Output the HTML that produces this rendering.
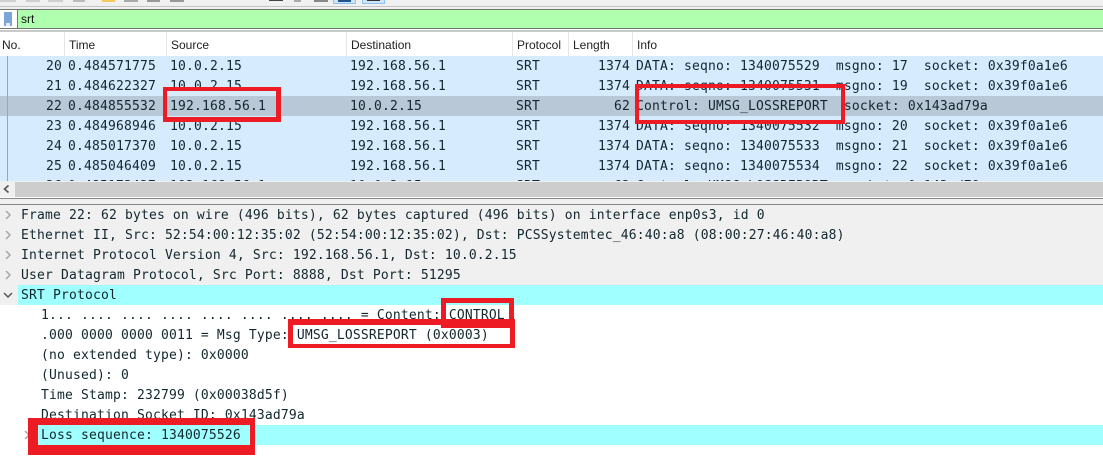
<!DOCTYPE html>
<html><head><meta charset="utf-8"><style>
html,body{margin:0;padding:0;width:1103px;height:461px;overflow:hidden;background:#fff}
div{position:absolute;box-sizing:border-box}
.t{font:13px/22px "DejaVu Sans Mono","Liberation Mono",monospace;letter-spacing:.17px;color:#12272e;white-space:pre;height:20px}
.h{font:12px/26px "Liberation Sans",sans-serif;color:#222;top:32px;height:24px;white-space:pre}
.sep{top:32px;width:1px;height:24px;background:#e5e5e5}
.r{border:4px solid #ed1c24;background:transparent}
</style></head><body>
<div style="left:0;top:0;width:1103px;height:10px;background:#f0f0f0"></div>
<div style="left:0;top:6px;width:1103px;height:1px;background:#c4c4c4"></div>
<div style="left:0;top:0;width:16px;height:2px;background:#cfcfcf"></div>
<div style="left:26px;top:0;width:14px;height:2px;background:#cfcfcf"></div>
<div style="left:48px;top:0;width:15px;height:2px;background:#cfcfcf"></div>
<div style="left:73px;top:0;width:12px;height:2px;background:#bbb"></div>
<div style="left:102px;top:0;width:13px;height:2px;background:#f5c860"></div>
<div style="left:124px;top:0;width:14px;height:2px;background:#aaa"></div>
<div style="left:147px;top:0;width:13px;height:2px;background:#999"></div>
<div style="left:170px;top:0;width:14px;height:2px;background:#999"></div>
<div style="left:269px;top:0;width:14px;height:1px;background:#444"></div>
<div style="left:294px;top:0;width:7px;height:2px;background:#aaa"></div>
<div style="left:314px;top:0;width:14px;height:2px;background:#888"></div>
<div style="left:333px;top:0;width:23px;height:4px;background:#cde4f7;border:1px solid #8ec2ee;border-top:0"></div>
<div style="left:338px;top:0;width:13px;height:2px;background:#24528c"></div>
<div style="left:362px;top:0;width:23px;height:4px;background:#cde4f7;border:1px solid #8ec2ee;border-top:0"></div>
<div style="left:367px;top:0;width:13px;height:1px;background:#333"></div>
<div style="left:0;top:9px;width:1103px;height:20px;background:#afffaf;border-top:1px solid #6f776f;border-bottom:1px solid #6f776f"></div>
<div style="left:0;top:10px;width:18px;height:18px;background:#fff;border-right:1px solid #777"></div>
<div style="left:4px;top:12px;width:8px;height:14px;background:#7ba6d8"></div>
<div style="left:6px;top:23px;width:4px;height:3px;background:#e8eef6"></div>
<div style="left:21px;top:10px;font:12px/19px 'Liberation Sans',sans-serif;color:#111">srt</div>
<div style="left:0;top:30px;width:1103px;height:2px;background:#c9c9c9"></div>

<div class="h" style="left:2px">No.</div><div class="sep" style="left:64px"></div>
<div class="h" style="left:69px">Time</div><div class="sep" style="left:166px"></div>
<div class="h" style="left:171px">Source</div><div class="sep" style="left:346px"></div>
<div class="h" style="left:351px">Destination</div><div class="sep" style="left:512px"></div>
<div class="h" style="left:517px">Protocol</div><div class="sep" style="left:568px"></div>
<div class="h" style="left:573px">Length</div><div class="sep" style="left:632px"></div>
<div class="h" style="left:637px">Info</div>

<div style="left:0;top:56px;width:1103px;height:125px;background:#d7ebff;overflow:hidden">
<div style="left:0;top:40px;width:1103px;height:20px;background:#b8c8d6"></div>
<div style="left:7px;top:0;width:1px;height:125px;background:#9aa6b0"></div>

<div class="t" style="left:46px;top:0">20</div><div class="t" style="left:68px;top:0">0.484571775</div><div class="t" style="left:170px;top:0">10.0.2.15</div><div class="t" style="left:350px;top:0">192.168.56.1</div><div class="t" style="left:516px;top:0">SRT</div><div class="t" style="left:598px;top:0">1374</div><div class="t" style="left:636px;top:0">DATA: seqno: 1340075529  msgno: 17  socket: 0x39f0a1e6</div>

<div class="t" style="left:46px;top:20px">21</div><div class="t" style="left:68px;top:20px">0.484622327</div><div class="t" style="left:170px;top:20px">10.0.2.15</div><div class="t" style="left:350px;top:20px">192.168.56.1</div><div class="t" style="left:516px;top:20px">SRT</div><div class="t" style="left:598px;top:20px">1374</div><div class="t" style="left:636px;top:20px">DATA: seqno: 1340075531  msgno: 19  socket: 0x39f0a1e6</div>

<div class="t" style="left:46px;top:40px">22</div><div class="t" style="left:68px;top:40px">0.484855532</div><div class="t" style="left:170px;top:40px">192.168.56.1</div><div class="t" style="left:350px;top:40px">10.0.2.15</div><div class="t" style="left:516px;top:40px">SRT</div><div class="t" style="left:614px;top:40px">62</div><div class="t" style="left:636px;top:40px">Control: UMSG_LOSSREPORT  socket: 0x143ad79a</div>

<div class="t" style="left:46px;top:60px">23</div><div class="t" style="left:68px;top:60px">0.484968946</div><div class="t" style="left:170px;top:60px">10.0.2.15</div><div class="t" style="left:350px;top:60px">192.168.56.1</div><div class="t" style="left:516px;top:60px">SRT</div><div class="t" style="left:598px;top:60px">1374</div><div class="t" style="left:636px;top:60px">DATA: seqno: 1340075532  msgno: 20  socket: 0x39f0a1e6</div>

<div class="t" style="left:46px;top:80px">24</div><div class="t" style="left:68px;top:80px">0.485017370</div><div class="t" style="left:170px;top:80px">10.0.2.15</div><div class="t" style="left:350px;top:80px">192.168.56.1</div><div class="t" style="left:516px;top:80px">SRT</div><div class="t" style="left:598px;top:80px">1374</div><div class="t" style="left:636px;top:80px">DATA: seqno: 1340075533  msgno: 21  socket: 0x39f0a1e6</div>

<div class="t" style="left:46px;top:100px">25</div><div class="t" style="left:68px;top:100px">0.485046409</div><div class="t" style="left:170px;top:100px">10.0.2.15</div><div class="t" style="left:350px;top:100px">192.168.56.1</div><div class="t" style="left:516px;top:100px">SRT</div><div class="t" style="left:598px;top:100px">1374</div><div class="t" style="left:636px;top:100px">DATA: seqno: 1340075534  msgno: 22  socket: 0x39f0a1e6</div>

<div class="t" style="left:46px;top:120px">26</div><div class="t" style="left:68px;top:120px">0.485173427</div><div class="t" style="left:170px;top:120px">192.168.56.1</div><div class="t" style="left:350px;top:120px">10.0.2.15</div><div class="t" style="left:516px;top:120px">SRT</div><div class="t" style="left:614px;top:120px">62</div><div class="t" style="left:636px;top:120px">Control: UMSG_LOSSREPORT  socket: 0x143ad79a</div>
</div>

<div style="left:0;top:181px;width:1103px;height:16px;background:#f0f0f0"></div>
<div style="left:15px;top:182px;width:1088px;height:15px;background:#cdcdcd"></div>
<svg style="position:absolute;left:2px;top:184px" width="10" height="10"><path d="M6.5 1.5L2.5 5l4 3.5" fill="none" stroke="#555" stroke-width="1.6"/></svg>
<div style="left:0;top:198px;width:1103px;height:1px;background:#84878c"></div>
<div style="left:0;top:199px;width:1103px;height:5px;background:#f0f0f0"></div>
<div style="left:0;top:204px;width:1103px;height:1px;background:#84878c"></div>

<div style="left:0;top:205px;width:1103px;height:80px;background:#f0f0f0"></div>
<div style="left:0;top:285px;width:18px;height:20px;background:#f0f0f0"></div>
<div style="left:18px;top:285px;width:1085px;height:20px;background:#a0ffff"></div>
<div style="left:38px;top:425px;width:1065px;height:20px;background:#a0ffff"></div>

<svg style="position:absolute;left:0;top:205px" width="40" height="240" fill="none">
<path d="M6 6l4 4-4 4M6 26l4 4-4 4M6 46l4 4-4 4M6 66l4 4-4 4" stroke="#a8a8a8" stroke-width="1.5"/>
<path d="M4 88l4 4 4-4" stroke="#555" stroke-width="1.5"/>
<path d="M25 226l4 4-4 4" stroke="#a8a8a8" stroke-width="1.5"/>
</svg>

<div class="t" style="left:21px;top:205px">Frame 22: 62 bytes on wire (496 bits), 62 bytes captured (496 bits) on interface enp0s3, id 0</div>
<div class="t" style="left:21px;top:225px">Ethernet II, Src: 52:54:00:12:35:02 (52:54:00:12:35:02), Dst: PCSSystemtec_46:40:a8 (08:00:27:46:40:a8)</div>
<div class="t" style="left:21px;top:245px">Internet Protocol Version 4, Src: 192.168.56.1, Dst: 10.0.2.15</div>
<div class="t" style="left:21px;top:265px">User Datagram Protocol, Src Port: 8888, Dst Port: 51295</div>
<div class="t" style="left:21px;top:285px">SRT Protocol</div>
<div class="t" style="left:41px;top:305px">1... .... .... .... .... .... .... .... = Content: CONTROL</div>
<div class="t" style="left:41px;top:325px">.000 0000 0000 0011 = Msg Type: UMSG_LOSSREPORT (0x0003)</div>
<div class="t" style="left:41px;top:345px">(no extended type): 0x0000</div>
<div class="t" style="left:41px;top:365px">(Unused): 0</div>
<div class="t" style="left:41px;top:385px">Time Stamp: 232799 (0x00038d5f)</div>
<div class="t" style="left:41px;top:405px">Destination Socket ID: 0x143ad79a</div>
<div class="t" style="left:41px;top:425px">Loss sequence: 1340075526</div>

<div class="r" style="left:163px;top:87px;width:118px;height:35px;border-width:4px 5px 5px 4px"></div>
<div class="r" style="left:635px;top:84px;width:210px;height:40px"></div>
<div class="r" style="left:441px;top:298px;width:73px;height:30px;border-width:5px"></div>
<div class="r" style="left:288px;top:319px;width:227px;height:29px;border-width:6px 5px 4px 5px"></div>
<div class="r" style="left:28px;top:418px;width:227px;height:37px;border-width:7px 5px 10px 10px"></div>
</body></html>
